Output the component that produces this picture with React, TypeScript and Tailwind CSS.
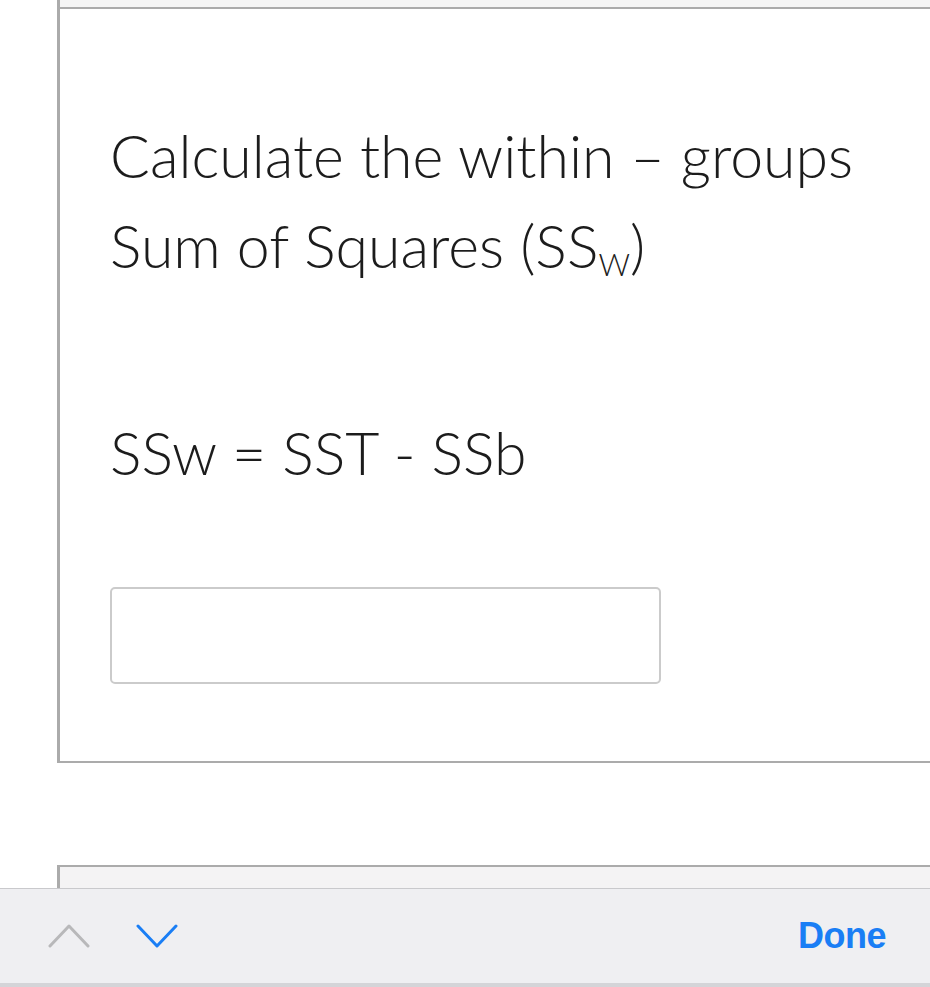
export default function App() {
  return (
    <div className="relative h-[987px] w-[930px] overflow-hidden bg-white font-['Lato','Noto_Sans',sans-serif]">
      {/* tail of the previous question card */}
      <div className="ml-[57px] h-[7px] border-l-[3px] border-[#ababab] bg-[#f5f5f5]" />

      {/* question card */}
      <div className="ml-[57px] border-y-[2px] border-l-[3px] border-[#ababab] bg-white pb-[77px] pl-[50px] pt-[102px]">
        <p className="text-[59px] font-light leading-[90px] text-[#1c1c1c]">
          Calculate the within – groups
          <br />
          Sum of Squares (SS
          <sub className="text-[31px] leading-none">W</sub>)
        </p>
        <p className="mt-[117px] text-[59px] font-light leading-[90px] text-[#1c1c1c]">
          SSw = SST - SSb
        </p>
        <input
          type="text"
          className="mt-[89px] block h-[97px] w-[551px] rounded-[5px] border-[2px] border-[#cbcbcb] bg-white outline-none"
        />
      </div>

      {/* next question card, peeking */}
      <div className="ml-[57px] mt-[102px] h-[23px] border-l-[3px] border-t-[2px] border-[#ababab] bg-[#f4f3f4]" />

      {/* keyboard accessory bar */}
      <div className="flex h-[99px] items-center justify-between border-t border-[#c9c9cc] bg-[#efeff2] pb-[4px] pl-[48px] pr-[44px]">
        <div className="flex items-center gap-[46px]">
          <svg width="42" height="26" viewBox="0 0 42 26" fill="none">
            <path d="M2 23 L21 3 L40 23" stroke="#b8b8ba" strokeWidth="3" strokeLinecap="round" strokeLinejoin="round" />
          </svg>
          <svg width="42" height="26" viewBox="0 0 42 26" fill="none">
            <path d="M2 3 L21 23 L40 3" stroke="#1a7ef5" strokeWidth="3" strokeLinecap="round" strokeLinejoin="round" />
          </svg>
        </div>
        <button className="font-['Liberation_Sans',Arial,sans-serif] text-[36px] font-bold tracking-[-0.5px] text-[#1a7ef5]">
          Done
        </button>
      </div>
      <div className="absolute bottom-0 left-0 h-[4px] w-full bg-[#d4d4d8]" />
    </div>
  );
}
